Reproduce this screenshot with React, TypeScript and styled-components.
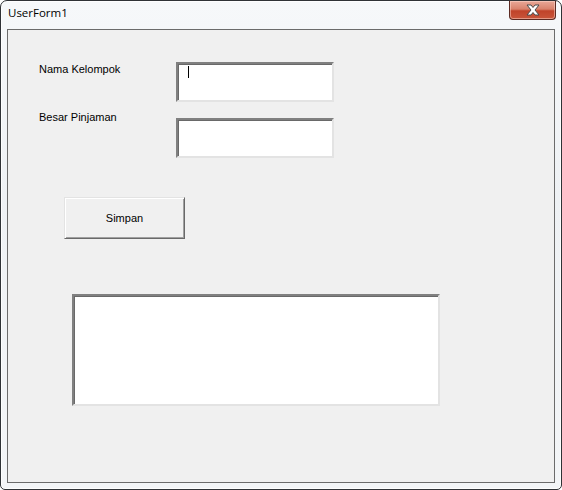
import { FC } from 'react';
import styled, { createGlobalStyle } from 'styled-components';

const GlobalStyle = createGlobalStyle`
  html, body {
    margin: 0;
    padding: 0;
    background: #ffffff;
  }
`;

const Window = styled.div`
  box-sizing: border-box;
  width: 562px;
  height: 490px;
  border: 1px solid #2f3236;
  border-radius: 7px 7px 5px 5px;
  background: linear-gradient(180deg, #f6f8fa 0%, #eef1f4 40%, #f3f5f7 100%);
  display: flex;
  flex-direction: column;
  padding: 0 6px 6px 6px;
  box-shadow: inset 0 0 0 1px rgba(255, 255, 255, 0.85);
`;

const TitleBar = styled.div`
  height: 28px;
  display: flex;
  align-items: flex-start;
  justify-content: space-between;
`;

const Title = styled.div`
  font-family: 'Open Sans', 'Noto Sans', sans-serif;
  font-size: 11.5px;
  color: #000;
  padding: 4px 0 0 1px;
  line-height: 16px;
`;

const CloseButton = styled.div`
  width: 47px;
  height: 19px;
  margin-right: -1px;
  box-sizing: border-box;
  border: 1px solid #5b2a22;
  border-top: none;
  border-radius: 0 0 4px 4px;
  background: linear-gradient(180deg, #e9a898 0%, #d9826c 45%, #c0432a 55%, #c9553a 100%);
  box-shadow: inset 0 0 0 1px rgba(255, 220, 210, 0.5);
  display: flex;
  align-items: center;
  justify-content: center;
`;

const Client = styled.div`
  flex: 1;
  border: 1px solid #6b6b6b;
  background: #f0f0f0;
  padding: 32px 0 0 31px;
  display: flex;
  flex-direction: column;
  align-items: flex-start;
`;

const FormGrid = styled.div`
  display: grid;
  grid-template-columns: 137px 158px;
  row-gap: 16px;
`;

const Label = styled.div<{ shift: number }>`
  font-family: 'Liberation Sans', Arial, sans-serif;
  font-size: 11px;
  color: #000;
  margin-top: ${p => p.shift}px;
`;

const TextBox = styled.div<{ w: number; h: number }>`
  box-sizing: border-box;
  position: relative;
  width: ${p => p.w}px;
  height: ${p => p.h}px;
  background: #fff;
  border-top: 2px solid #808080;
  border-left: 2px solid #808080;
  border-bottom: 2px solid #e3e3e3;
  border-right: 2px solid #e3e3e3;
  box-shadow: inset 1px 1px 0 #696969;
`;

const Caret = styled.div`
  position: absolute;
  left: 10px;
  top: 2px;
  width: 1px;
  height: 12px;
  background: #000;
`;

const Button = styled.div`
  box-sizing: border-box;
  width: 121px;
  height: 42px;
  margin: 39px 0 0 25px;
  background: #f0f0f0;
  border-top: 1px solid #e3e3e3;
  border-left: 1px solid #e3e3e3;
  border-bottom: 1px solid #696969;
  border-right: 1px solid #696969;
  box-shadow: inset 1px 1px 0 #ffffff, inset -1px -1px 0 #a0a0a0;
  display: flex;
  align-items: center;
  justify-content: center;
  font-family: 'Liberation Sans', Arial, sans-serif;
  font-size: 11px;
  color: #000;
`;

const Memo = styled(TextBox)`
  margin: 55px 0 0 33px;
`;

const App: FC = () => {
  return (
    <>
      <GlobalStyle />
      <Window>
        <TitleBar>
          <Title>UserForm1</Title>
          <CloseButton>
            <svg width="18" height="14" viewBox="0 0 18 14">
              <path
                d="M3 2 H7 L9 4.5 L11 2 H15 L11 7 L15 12 H11 L9 9.5 L7 12 H3 L7 7 Z"
                fill="#ffffff"
                stroke="#4a4a4a"
                strokeWidth="1"
                strokeLinejoin="round"
              />
            </svg>
          </CloseButton>
        </TitleBar>
        <Client>
          <FormGrid>
            <Label shift={1}>Nama Kelompok</Label>
            <TextBox w={158} h={40}>
              <Caret />
            </TextBox>
            <Label shift={-7}>Besar Pinjaman</Label>
            <TextBox w={158} h={40} />
          </FormGrid>
          <Button>Simpan</Button>
          <Memo w={368} h={112} />
        </Client>
      </Window>
    </>
  );
};

export default App;
